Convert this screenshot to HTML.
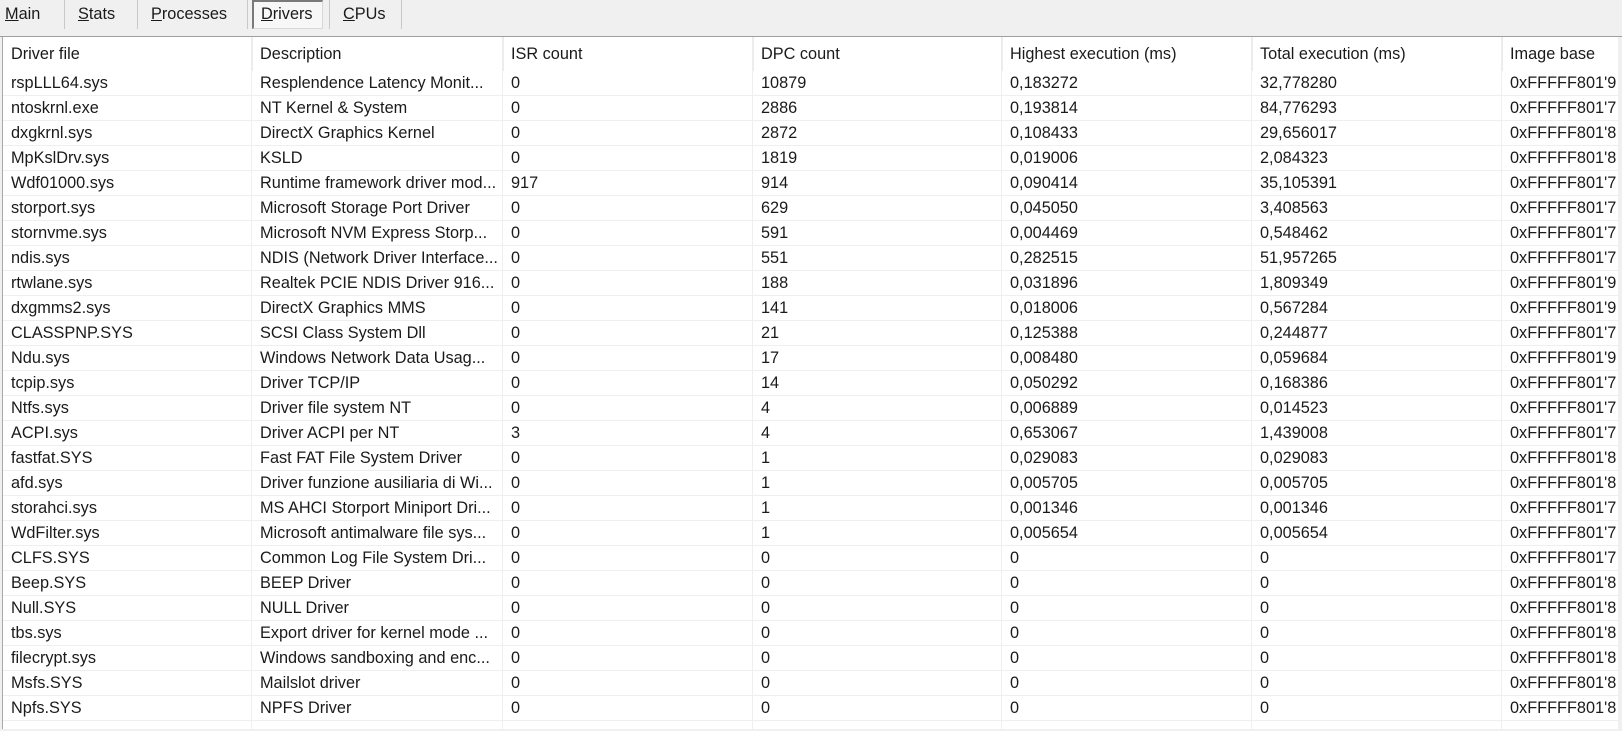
<!DOCTYPE html>
<html><head><meta charset="utf-8"><style>
*{margin:0;padding:0;box-sizing:border-box}
body{width:1622px;height:731px;background:#f0f0f0;font-family:"Liberation Sans",Arial,sans-serif;font-size:16.3px;color:#1a1a1a;position:relative;overflow:hidden}
.tab{position:absolute;top:3px;height:22px;line-height:22px}
.sep{position:absolute;top:0;width:1px;height:29px;background:#c8c8c8}
.sel{position:absolute;left:252px;top:0;width:71px;height:29px;background:#f7f7f7;border-top:2px solid #7a7a7a;border-left:2px solid #7a7a7a;border-right:1px solid #d8d8d8;border-bottom:1px solid #d8d8d8}
.bar{position:absolute;left:0;top:36px;width:1622px;height:1px;background:#a0a0a0}
.tbl{position:absolute;left:2px;top:37px;width:1616px;height:692px;background:#fff;border-left:1px solid #a8a8a8;overflow:hidden}
.row{position:absolute;left:0;height:25px;width:1616px;border-bottom:1px solid #efefef}
.c{position:absolute;top:0;line-height:24px;white-space:nowrap;height:24px;padding-left:8px}
.h .c{line-height:34px;height:34px}
.vl{position:absolute;top:34px;bottom:0;width:1px;background:#efefef}
.hv{position:absolute;top:0;height:34px;width:2px;background:#ececec}
u{text-decoration:underline}
</style></head><body>
<div class="sel"></div>
<div class="tab" style="left:5px"><u>M</u>ain</div>
<div class="sep" style="left:64px"></div>
<div class="tab" style="left:78px"><u>S</u>tats</div>
<div class="sep" style="left:137px"></div>
<div class="tab" style="left:151px"><u>P</u>rocesses</div>
<div class="sep" style="left:247px"></div>
<div class="tab" style="left:261px"><u>D</u>rivers</div>
<div class="sep" style="left:329px"></div>
<div class="tab" style="left:343px"><u>C</u>PUs</div>
<div class="sep" style="left:401px"></div>
<div class="bar"></div>
<div class="tbl" id="t"></div>
<script>
var cols=[0,249,500,750,999,1249,1499];
var data=[
["rspLLL64.sys","Resplendence Latency Monit...","0","10879","0,183272","32,778280","0xFFFFF801'9"],
["ntoskrnl.exe","NT Kernel & System","0","2886","0,193814","84,776293","0xFFFFF801'7"],
["dxgkrnl.sys","DirectX Graphics Kernel","0","2872","0,108433","29,656017","0xFFFFF801'8"],
["MpKslDrv.sys","KSLD","0","1819","0,019006","2,084323","0xFFFFF801'8"],
["Wdf01000.sys","Runtime framework driver mod...","917","914","0,090414","35,105391","0xFFFFF801'7"],
["storport.sys","Microsoft Storage Port Driver","0","629","0,045050","3,408563","0xFFFFF801'7"],
["stornvme.sys","Microsoft NVM Express Storp...","0","591","0,004469","0,548462","0xFFFFF801'7"],
["ndis.sys","NDIS (Network Driver Interface...","0","551","0,282515","51,957265","0xFFFFF801'7"],
["rtwlane.sys","Realtek PCIE NDIS Driver 916...","0","188","0,031896","1,809349","0xFFFFF801'9"],
["dxgmms2.sys","DirectX Graphics MMS","0","141","0,018006","0,567284","0xFFFFF801'9"],
["CLASSPNP.SYS","SCSI Class System Dll","0","21","0,125388","0,244877","0xFFFFF801'7"],
["Ndu.sys","Windows Network Data Usag...","0","17","0,008480","0,059684","0xFFFFF801'9"],
["tcpip.sys","Driver TCP/IP","0","14","0,050292","0,168386","0xFFFFF801'7"],
["Ntfs.sys","Driver file system NT","0","4","0,006889","0,014523","0xFFFFF801'7"],
["ACPI.sys","Driver ACPI per NT","3","4","0,653067","1,439008","0xFFFFF801'7"],
["fastfat.SYS","Fast FAT File System Driver","0","1","0,029083","0,029083","0xFFFFF801'8"],
["afd.sys","Driver funzione ausiliaria di Wi...","0","1","0,005705","0,005705","0xFFFFF801'8"],
["storahci.sys","MS AHCI Storport Miniport Dri...","0","1","0,001346","0,001346","0xFFFFF801'7"],
["WdFilter.sys","Microsoft antimalware file sys...","0","1","0,005654","0,005654","0xFFFFF801'7"],
["CLFS.SYS","Common Log File System Dri...","0","0","0","0","0xFFFFF801'7"],
["Beep.SYS","BEEP Driver","0","0","0","0","0xFFFFF801'8"],
["Null.SYS","NULL Driver","0","0","0","0","0xFFFFF801'8"],
["tbs.sys","Export driver for kernel mode ...","0","0","0","0","0xFFFFF801'8"],
["filecrypt.sys","Windows sandboxing and enc...","0","0","0","0","0xFFFFF801'8"],
["Msfs.SYS","Mailslot driver","0","0","0","0","0xFFFFF801'8"],
["Npfs.SYS","NPFS Driver","0","0","0","0","0xFFFFF801'8"]];
var hdr=["Driver file","Description","ISR count","DPC count","Highest execution (ms)","Total execution (ms)","Image base"];
var h='<div class="row h" style="top:0;height:34px;border:none">';
for(var i=0;i<7;i++){h+='<div class="c" style="left:'+cols[i]+'px">'+hdr[i]+'</div>';if(i)h+='<div class="hv" style="left:'+(cols[i]-1)+'px"></div>';}
h+='</div>';
for(var r=0;r<data.length;r++){h+='<div class="row" style="top:'+(34+r*25)+'px">';for(var i=0;i<7;i++)h+='<div class="c" style="left:'+cols[i]+'px">'+data[r][i].replace(/&/g,'&amp;')+'</div>';h+='</div>';}
for(var i=1;i<7;i++)h+='<div class="vl" style="left:'+(cols[i]-1)+'px"></div>';
document.getElementById('t').innerHTML=h;
</script>
</body></html>
